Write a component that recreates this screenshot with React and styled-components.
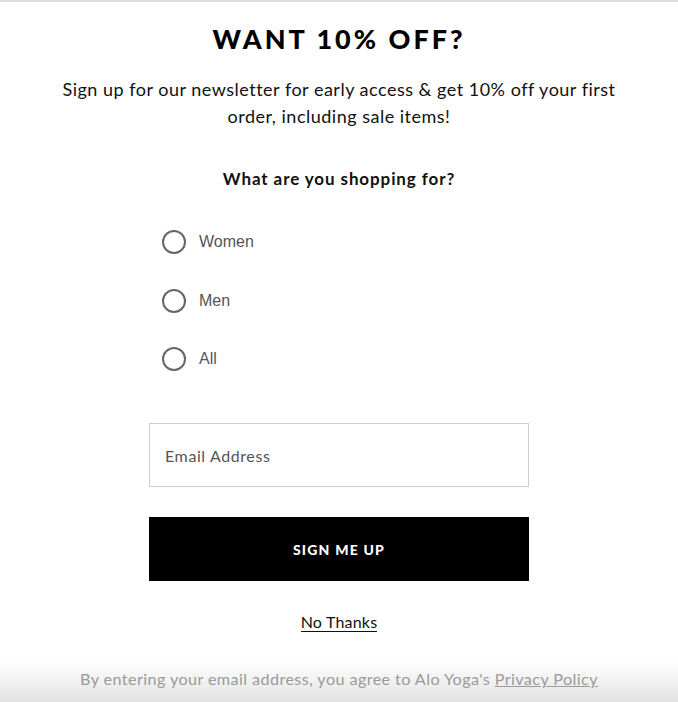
import React, { useState } from 'react'
import styled, { createGlobalStyle } from 'styled-components'

const GlobalStyle = createGlobalStyle`
  html, body {
    margin: 0;
    padding: 0;
    background: #fff;
  }
  body {
    font-family: "Lato", "Open Sans", sans-serif;
    -webkit-font-smoothing: antialiased;
  }
`

const options = ['Women', 'Men', 'All']

const App = () => {
  const [choice, setChoice] = useState(null)

  return (
    <>
      <GlobalStyle />
      <Wrapper>
        <Title>WANT 10% OFF?</Title>
        <Intro>
          Sign up for our newsletter for early access &amp; get 10% off your first
          <br />
          order, including sale items!
        </Intro>
        <Question>What are you shopping for?</Question>

        <RadioList>
          {options.map(o => (
            <RadioRow key={o} onClick={() => setChoice(o)}>
              <Circle $checked={choice === o} />
              <span>{o}</span>
            </RadioRow>
          ))}
        </RadioList>

        <Form onSubmit={e => e.preventDefault()}>
          <EmailInput type='email' placeholder='Email Address' />
          <SubmitButton type='submit'>SIGN ME UP</SubmitButton>
        </Form>

        <NoThanks href='#'>No Thanks</NoThanks>

        <Footer>
          By entering your email address, you agree to Alo Yoga's{' '}
          <a href='#'>Privacy Policy</a>
        </Footer>
      </Wrapper>
    </>
  )
}

const Wrapper = styled.main`
  width: 678px;
  height: 702px;
  box-sizing: border-box;
  border-top: 2px solid #dedede;
  display: flex;
  flex-direction: column;
  align-items: center;
  overflow: hidden;
  color: #111;
`

const Title = styled.h1`
  margin: 21px 0 0;
  font-family: "Lato", sans-serif;
  font-weight: 900;
  font-size: 27px;
  line-height: 32px;
  letter-spacing: 3px;
  color: #000;
`

const Intro = styled.p`
  margin: 21px 0 0;
  text-align: center;
  font-family: "Lato", sans-serif;
  font-size: 18px;
  line-height: 27px;
  letter-spacing: 0.5px;
  color: #111;
`

const Question = styled.h2`
  margin: 37px 0 0;
  font-family: "Lato", sans-serif;
  font-weight: 700;
  font-size: 17px;
  line-height: 24px;
  letter-spacing: 0.9px;
  color: #111;
`

const RadioList = styled.div`
  align-self: flex-start;
  margin: 39px 0 0 162px;
  display: flex;
  flex-direction: column;
  gap: 34.5px;
`

const RadioRow = styled.label`
  display: flex;
  align-items: center;
  gap: 13px;
  height: 24px;
  cursor: pointer;
  font-family: "Liberation Sans", Arial, sans-serif;
  font-size: 16px;
  color: #555;
`

const Circle = styled.span`
  width: 20px;
  height: 20px;
  border: 2px solid #666;
  border-radius: 50%;
  box-sizing: content-box;
  background: ${p => (p.$checked ? 'radial-gradient(#333 45%, transparent 50%)' : 'transparent')};
`

const Form = styled.form`
  margin-top: 52px;
  display: flex;
  flex-direction: column;
  gap: 30px;
  width: 380px;
`

const EmailInput = styled.input`
  height: 64px;
  box-sizing: border-box;
  border: 1px solid #cccccc;
  padding: 0 15px;
  font-family: "Lato", sans-serif;
  font-size: 16px;
  letter-spacing: 0.6px;
  color: #333;
  outline: none;
  &::placeholder {
    color: #555;
  }
`

const SubmitButton = styled.button`
  height: 64px;
  border: none;
  background: #000;
  color: #fff;
  font-family: "Lato", sans-serif;
  font-weight: 900;
  font-size: 14px;
  letter-spacing: 1.2px;
  cursor: pointer;
`

const NoThanks = styled.a`
  margin-top: 31px;
  font-family: "Lato", sans-serif;
  font-size: 16px;
  letter-spacing: 0.2px;
  color: #111;
  text-decoration: none;
  border-bottom: 1.5px solid #111;
  line-height: 19px;
`

const Footer = styled.footer`
  margin-top: auto;
  width: 100%;
  height: 58px;
  box-sizing: border-box;
  padding-top: 25px;
  text-align: center;
  font-family: "Lato", sans-serif;
  font-size: 16.2px;
  line-height: 20px;
  letter-spacing: 0.4px;
  color: #9a9a9a;
  background: linear-gradient(#ffffff 30%, #e2e2e2);

  a {
    color: #9a9a9a;
  }
`

export default App
